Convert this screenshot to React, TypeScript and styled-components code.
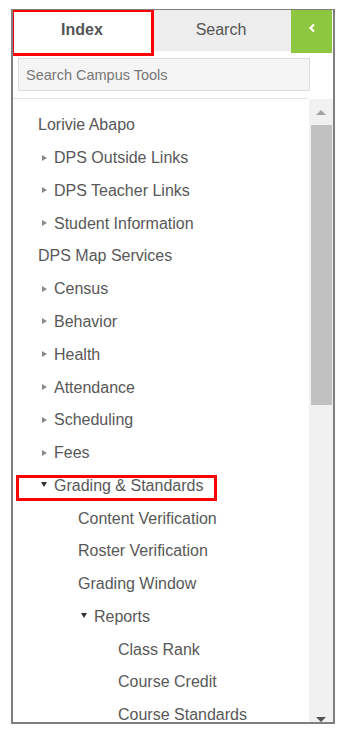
import React from "react";
import styled, { createGlobalStyle } from "styled-components";

const Global = createGlobalStyle`
  html, body { margin: 0; padding: 0; background: #fff; }
  body { font-family: "Liberation Sans", Arial, sans-serif; }
`;

const Frame = styled.div`
  position: relative;
  margin: 9px 0 0 11px;
  width: 320px;
  height: 712px;
  border: 2px solid #7f7f7f;
  border-top-width: 1px;
  display: flex;
  flex-direction: column;
  background: #fff;
  overflow: hidden;
`;

const Tabs = styled.div`
  display: grid;
  grid-template-columns: 138px 140px 41px 1px;
  height: 43px;
`;

const Tab = styled.div<{ $active?: boolean }>`
  display: flex;
  align-items: center;
  justify-content: center;
  font-size: 16px;
  color: #555;
  font-weight: ${(p) => (p.$active ? 700 : 400)};
  background: ${(p) => (p.$active ? "#fff" : "#ededed")};
  height: ${(p) => (p.$active ? "43px" : "41px")};
  box-sizing: border-box;
  padding-bottom: ${(p) => (p.$active ? "4px" : "2px")};
`;

const CollapseButton = styled.div`
  background: #8dc63f;
  display: flex;
  align-items: center;
  justify-content: center;
  padding-bottom: 8px;
`;

const SearchWrap = styled.div`
  padding: 5px 0 7px 5px;
  border-bottom: 1px solid #e2e2e2;
  margin-right: 25px;
`;

const SearchInput = styled.div`
  height: 33px;
  box-sizing: border-box;
  width: 292px;
  border: 1px solid #dcdcdc;
  background: #f5f5f5;
  color: #777;
  font-size: 14.5px;
  display: flex;
  align-items: center;
  padding-left: 7px;
`;

const Body = styled.div`
  flex: 1;
  display: flex;
  min-height: 0;
`;

const TreeArea = styled.div`
  flex: 1;
  overflow: hidden;
  padding-top: 10px;
`;

const Scrollbar = styled.div`
  width: 24px;
  background: #f1f1f1;
  display: flex;
  flex-direction: column;
  align-items: center;
`;

const ArrowBox = styled.div`
  height: 26px;
  width: 100%;
  display: flex;
  align-items: center;
  justify-content: center;
`;

const Thumb = styled.div`
  width: 21px;
  height: 280px;
  background: #c1c1c1;
  margin-left: 1px;
`;

const Spacer = styled.div`
  flex: 1;
`;

const BottomArrow = styled.div`
  height: 6px;
  width: 100%;
  display: flex;
  justify-content: center;
  align-items: flex-end;
`;

const Row = styled.div<{ $indent: number }>`
  height: 32.78px;
  display: flex;
  align-items: center;
  padding-left: ${(p) => p.$indent}px;
  font-size: 16px;
  color: #585858;
  white-space: nowrap;
`;

const Caret = styled.span<{ $open?: boolean }>`
  display: inline-block;
  width: 0;
  height: 0;
  margin: 0 7px 1px 4px;
  ${(p) =>
    p.$open
      ? `border-left: 3px solid transparent; border-right: 3px solid transparent; border-top: 5px solid #333; margin-left: 3px; margin-right: 7px; margin-bottom: 3px;`
      : `border-top: 3px solid transparent; border-bottom: 3px solid transparent; border-left: 5px solid #8a8a8a;`}
`;

const Highlight = styled.div<{ $x: number; $y: number; $w: number; $h: number }>`
  position: absolute;
  left: ${(p) => p.$x}px;
  top: ${(p) => p.$y}px;
  width: ${(p) => p.$w}px;
  height: ${(p) => p.$h}px;
  border: 3px solid #ff0000;
  box-sizing: border-box;
  pointer-events: none;
`;

type Item = { label: string; indent: number; kind: "leaf" | "closed" | "open" };

const items: Item[] = [
  { label: "Lorivie Abapo", indent: 25, kind: "leaf" },
  { label: "DPS Outside Links", indent: 25, kind: "closed" },
  { label: "DPS Teacher Links", indent: 25, kind: "closed" },
  { label: "Student Information", indent: 25, kind: "closed" },
  { label: "DPS Map Services", indent: 25, kind: "leaf" },
  { label: "Census", indent: 25, kind: "closed" },
  { label: "Behavior", indent: 25, kind: "closed" },
  { label: "Health", indent: 25, kind: "closed" },
  { label: "Attendance", indent: 25, kind: "closed" },
  { label: "Scheduling", indent: 25, kind: "closed" },
  { label: "Fees", indent: 25, kind: "closed" },
  { label: "Grading & Standards", indent: 25, kind: "open" },
  { label: "Content Verification", indent: 65, kind: "leaf" },
  { label: "Roster Verification", indent: 65, kind: "leaf" },
  { label: "Grading Window", indent: 65, kind: "leaf" },
  { label: "Reports", indent: 65, kind: "open" },
  { label: "Class Rank", indent: 105, kind: "leaf" },
  { label: "Course Credit", indent: 105, kind: "leaf" },
  { label: "Course Standards", indent: 105, kind: "leaf" },
];

export default function App() {
  return (
    <>
      <Global />
      <Frame>
        <Tabs>
          <Tab $active>Index</Tab>
          <Tab>Search</Tab>
          <CollapseButton>
            <svg width="8" height="10" viewBox="0 0 8 10">
              <path d="M6 1.5 L2.5 5 L6 8.5" fill="none" stroke="#fff" strokeWidth="2.2" />
            </svg>
          </CollapseButton>
          <div />
        </Tabs>
        <SearchWrap>
          <SearchInput>Search Campus Tools</SearchInput>
        </SearchWrap>
        <Body>
          <TreeArea>
            {items.map((it) => (
              <Row key={it.label} $indent={it.indent}>
                {it.kind !== "leaf" && <Caret $open={it.kind === "open"} />}
                {it.label}
              </Row>
            ))}
          </TreeArea>
          <Scrollbar>
            <ArrowBox>
              <svg width="10" height="5" viewBox="0 0 10 5">
                <path d="M0 5 L5 0 L10 5 Z" fill="#a3a3a3" />
              </svg>
            </ArrowBox>
            <Thumb />
            <Spacer />
            <BottomArrow>
              <svg width="10" height="5" viewBox="0 0 10 5">
                <path d="M0 0 L10 0 L5 5 Z" fill="#505050" />
              </svg>
            </BottomArrow>
          </Scrollbar>
        </Body>
        <Highlight $x={-2} $y={-1} $w={143} $h={47} />
        <Highlight $x={3} $y={465} $w={201} $h={26} />
      </Frame>
    </>
  );
}
